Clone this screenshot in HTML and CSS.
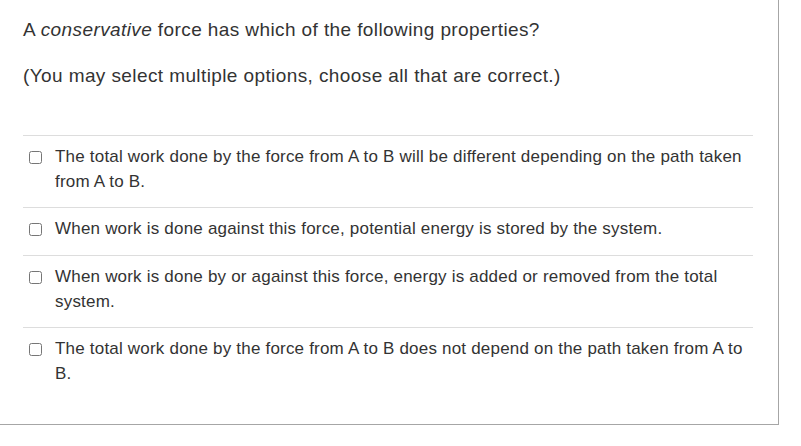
FILE: index.html
```html
<!DOCTYPE html>
<html lang="en">
<head>
<meta charset="utf-8">
<title>Conservative force question</title>
<link rel="stylesheet" href="styles.css">
</head>
<body>
<div class="question">
  <p class="prompt">A <em>conservative</em> force has which of the following properties?</p>
  <p class="prompt">(You may select multiple options, choose all that are correct.)</p>
  <ul class="options">
    <li class="option"><label class="option-label"><input type="checkbox" class="check"><span class="option-text">The total work done by the force from A to B will be different depending on the path taken from A to B.</span></label></li>
    <li class="option"><label class="option-label"><input type="checkbox" class="check"><span class="option-text">When work is done against this force, potential energy is stored by the system.</span></label></li>
    <li class="option"><label class="option-label"><input type="checkbox" class="check"><span class="option-text">When work is done by or against this force, energy is added or removed from the total system.</span></label></li>
    <li class="option"><label class="option-label"><input type="checkbox" class="check"><span class="option-text">The total work done by the force from A to B does not depend on the path taken from A to B.</span></label></li>
  </ul>
</div>
</body>
</html>
```

FILE: styles.css
```css
html, body {
  margin: 0;
  padding: 0;
  background: #fff;
}

body {
  font-family: "Liberation Sans", Arial, sans-serif;
  color: #333;
}

.question {
  box-sizing: border-box;
  width: 779px;
  height: 425px;
  border-right: 1px solid #a6a6a6;
  border-bottom: 1px solid #a6a6a6;
  padding: 17px 25px 0 23px;
}

.prompt {
  margin: 0 0 20px;
  font-size: 19px;
  letter-spacing: 0.4px;
  line-height: 26px;
}

.options {
  list-style: none;
  margin: 46px 0 0;
  padding: 0;
}

.option {
  border-top: 1px solid #dddddd;
  padding: 8px 0 13px 6px;
}

.option-label {
  display: flex;
  align-items: flex-start;
  gap: 13px;
  font-size: 17px;
  letter-spacing: 0.2px;
  line-height: 25px;
}

.check {
  flex: none;
  width: 13px;
  height: 13px;
  margin: 7px 0 6px;
}

.option-text {
  flex: 1;
}
```
